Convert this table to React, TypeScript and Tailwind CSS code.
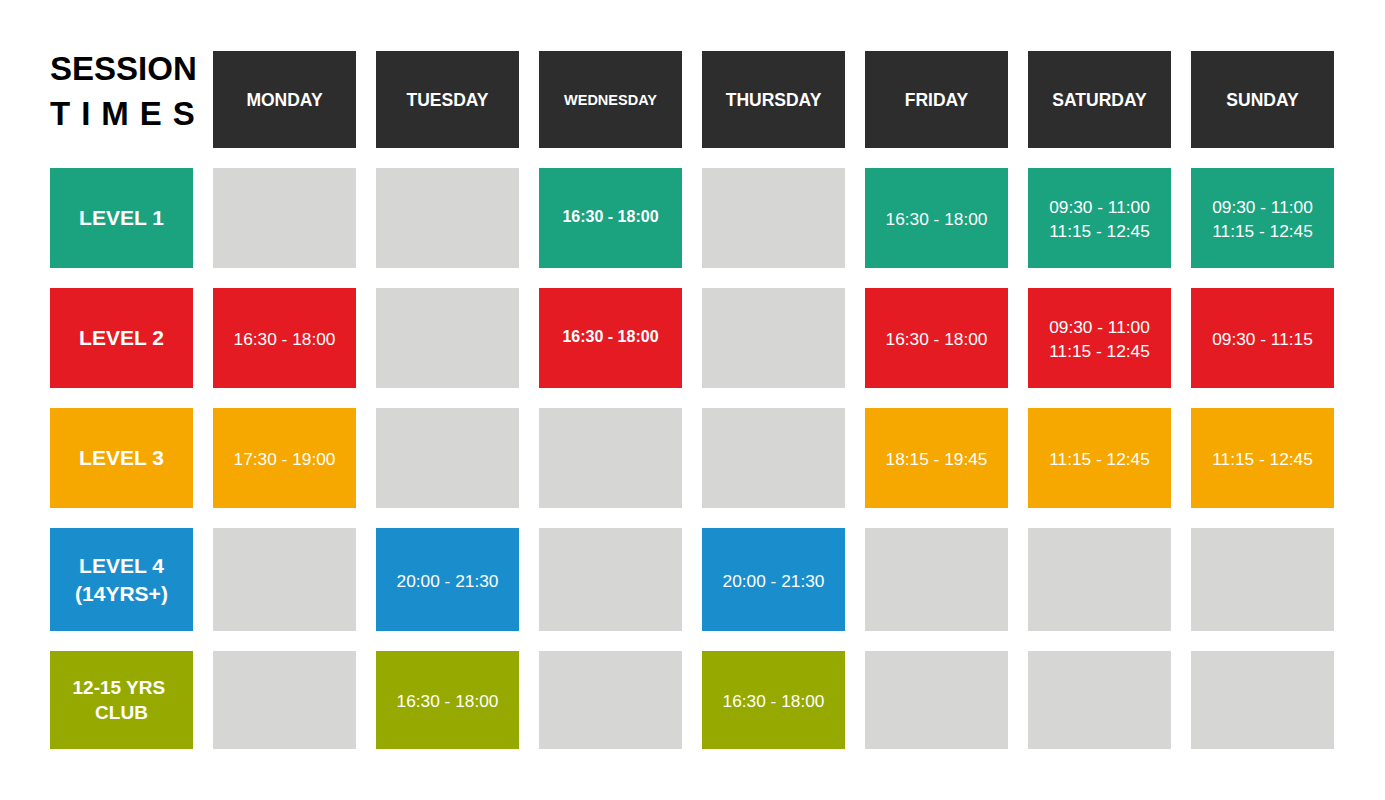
import React from 'react';

type Tone = 'green' | 'red' | 'orange' | 'blue' | 'olive';

const toneBg: Record<Tone, string> = {
  green: 'bg-[#1ba27f]',
  red: 'bg-[#e41b23]',
  orange: 'bg-[#f6a700]',
  blue: 'bg-[#1a8ecd]',
  olive: 'bg-[#96a900]',
};

const days = ['MONDAY', 'TUESDAY', 'WEDNESDAY', 'THURSDAY', 'FRIDAY', 'SATURDAY', 'SUNDAY'];

interface Row {
  label: string[];
  tone: Tone;
  height: string;
  labelClass: string;
  slots: (string[] | null)[];
}

const rows: Row[] = [
  {
    label: ['LEVEL 1'],
    tone: 'green',
    height: 'h-[100px]',
    labelClass: 'text-[21px] leading-[28px]',
    slots: [null, null, ['16:30 - 18:00'], null, ['16:30 - 18:00'], ['09:30 - 11:00', '11:15 - 12:45'], ['09:30 - 11:00', '11:15 - 12:45']],
  },
  {
    label: ['LEVEL 2'],
    tone: 'red',
    height: 'h-[100px]',
    labelClass: 'text-[21px] leading-[28px]',
    slots: [['16:30 - 18:00'], null, ['16:30 - 18:00'], null, ['16:30 - 18:00'], ['09:30 - 11:00', '11:15 - 12:45'], ['09:30 - 11:15']],
  },
  {
    label: ['LEVEL 3'],
    tone: 'orange',
    height: 'h-[100px]',
    labelClass: 'text-[21px] leading-[28px]',
    slots: [['17:30 - 19:00'], null, null, null, ['18:15 - 19:45'], ['11:15 - 12:45'], ['11:15 - 12:45']],
  },
  {
    label: ['LEVEL 4', '(14YRS+)'],
    tone: 'blue',
    height: 'h-[103px]',
    labelClass: 'text-[21px] leading-[28px]',
    slots: [null, ['20:00 - 21:30'], null, ['20:00 - 21:30'], null, null, null],
  },
  {
    label: ['12-15 YRS\u00a0', 'CLUB'],
    tone: 'olive',
    height: 'h-[98px]',
    labelClass: 'text-[19px] leading-[25px]',
    slots: [null, ['16:30 - 18:00'], null, ['16:30 - 18:00'], null, null, null],
  },
];

export default function App() {
  return (
    <div className="min-h-screen w-full bg-white font-['Liberation_Sans',Arial,sans-serif]">
      <div className="pl-[50px] pt-[51px] flex flex-col gap-5">
        {/* header */}
        <div className="grid grid-cols-[repeat(8,143px)] gap-5 h-[97px]">
          <div className="flex flex-col text-black font-bold -mt-[3px]">
            <span className="text-[33px] leading-[42px] whitespace-nowrap">SESSION</span>
            <span className="text-[33px] leading-[48px] tracking-[11px] whitespace-nowrap">TIMES</span>
          </div>
          {days.map(d => (
            <div key={d} className="bg-[#2d2d2d] flex items-center justify-center pt-[2px] text-white font-bold">
              <span className={d === 'WEDNESDAY' ? 'text-[14.5px]' : 'text-[17.5px]'}>{d}</span>
            </div>
          ))}
        </div>

        {rows.map((row, i) => (
          <div key={i} className={`grid grid-cols-[repeat(8,143px)] gap-5 ${row.height}`}>
            <div className={`${toneBg[row.tone]} flex flex-col items-center justify-center text-white font-bold text-center ${row.labelClass}`}>
              {row.label.map(l => <span key={l} className="whitespace-pre">{l}</span>)}
            </div>
            {row.slots.map((s, j) => (
              <div
                key={j}
                className={`${s ? toneBg[row.tone] : 'bg-[#d6d6d5]'} flex flex-col items-center justify-center pt-[2px] text-white text-center`}
              >
                {s && s.map(t => (
                  <span
                    key={t}
                    className={j === 2 ? 'text-[16px] leading-[24px] font-bold -mt-[4px]' : 'text-[17.3px] leading-[24px]'}
                  >
                    {t}
                  </span>
                ))}
              </div>
            ))}
          </div>
        ))}
      </div>
    </div>
  );
}
